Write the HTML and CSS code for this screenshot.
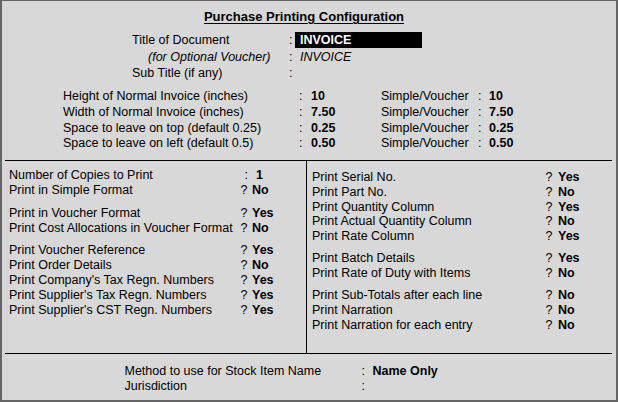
FILE: index.html
```html
<!DOCTYPE html>
<html lang="en">
<head>
<meta charset="utf-8">
<title>Purchase Printing Configuration</title>
<link rel="stylesheet" href="styles.css">
</head>
<body>
<div class="window">
  <header class="head">
    <div class="title-row"><h1 class="title">Purchase Printing Configuration</h1></div>
    <div class="doc-grid">
      <div class="lbl">Title of Document</div><div class="sep">:</div><div class="val val-selected">INVOICE</div>
      <div class="lbl lbl-opt">(for Optional Voucher)</div><div class="sep">:</div><div class="val val-opt">INVOICE</div>
      <div class="lbl">Sub Title (if any)</div><div class="sep">:</div><div class="val"></div>
    </div>
    <div class="dim-grid">
      <div>Height of Normal Invoice (inches)</div><div class="sep">:</div><div class="b">10</div><div>Simple/Voucher</div><div class="sep">:</div><div class="b">10</div>
      <div>Width of Normal Invoice (inches)</div><div class="sep">:</div><div class="b">7.50</div><div>Simple/Voucher</div><div class="sep">:</div><div class="b">7.50</div>
      <div>Space to leave on top (default 0.25)</div><div class="sep">:</div><div class="b">0.25</div><div>Simple/Voucher</div><div class="sep">:</div><div class="b">0.25</div>
      <div>Space to leave on left (default 0.5)</div><div class="sep">:</div><div class="b">0.50</div><div>Simple/Voucher</div><div class="sep">:</div><div class="b">0.50</div>
    </div>
  </header>

  <section class="options">
    <div class="col col-left">
      <div class="group">
        <div class="opt"><span>Number of Copies to Print</span><span class="osep osep-colon">:</span><span class="b oval-colon">1</span></div>
        <div class="opt"><span>Print in Simple Format</span><span class="osep">?</span><span class="b">No</span></div>
      </div>
      <div class="group">
        <div class="opt"><span>Print in Voucher Format</span><span class="osep">?</span><span class="b">Yes</span></div>
        <div class="opt"><span>Print Cost Allocations in Voucher Format</span><span class="osep">?</span><span class="b">No</span></div>
      </div>
      <div class="group">
        <div class="opt"><span>Print Voucher Reference</span><span class="osep">?</span><span class="b">Yes</span></div>
        <div class="opt"><span>Print Order Details</span><span class="osep">?</span><span class="b">No</span></div>
        <div class="opt"><span>Print Company's Tax Regn. Numbers</span><span class="osep">?</span><span class="b">Yes</span></div>
        <div class="opt"><span>Print Supplier's Tax Regn. Numbers</span><span class="osep">?</span><span class="b">Yes</span></div>
        <div class="opt"><span>Print Supplier's CST Regn. Numbers</span><span class="osep">?</span><span class="b">Yes</span></div>
      </div>
    </div>
    <div class="col col-right">
      <div class="group">
        <div class="opt"><span>Print Serial No.</span><span class="osep">?</span><span class="b">Yes</span></div>
        <div class="opt"><span>Print Part No.</span><span class="osep">?</span><span class="b">No</span></div>
        <div class="opt"><span>Print Quantity Column</span><span class="osep">?</span><span class="b">Yes</span></div>
        <div class="opt"><span>Print Actual Quantity Column</span><span class="osep">?</span><span class="b">No</span></div>
        <div class="opt"><span>Print Rate Column</span><span class="osep">?</span><span class="b">Yes</span></div>
      </div>
      <div class="group">
        <div class="opt"><span>Print Batch Details</span><span class="osep">?</span><span class="b">Yes</span></div>
        <div class="opt"><span>Print Rate of Duty with Items</span><span class="osep">?</span><span class="b">No</span></div>
      </div>
      <div class="group">
        <div class="opt"><span>Print Sub-Totals after each line</span><span class="osep">?</span><span class="b">No</span></div>
        <div class="opt"><span>Print Narration</span><span class="osep">?</span><span class="b">No</span></div>
        <div class="opt"><span>Print Narration for each entry</span><span class="osep">?</span><span class="b">No</span></div>
      </div>
    </div>
  </section>

  <footer class="foot">
    <div class="foot-grid">
      <div>Method to use for Stock Item Name</div><div class="sep">:</div><div class="b">Name Only</div>
      <div>Jurisdiction</div><div class="sep">:</div><div></div>
    </div>
  </footer>
</div>
</body>
</html>
```

FILE: styles.css
```css
* { box-sizing: border-box; }

html, body {
  margin: 0;
  padding: 0;
  background: #d8d8d8;
}

body {
  font-family: "Liberation Sans", Arial, sans-serif;
  font-size: 12.5px;
  color: #000;
}

.window {
  width: 618px;
  height: 402px;
  background: #d8d8d8;
  border-style: solid;
  border-color: #646464;
  border-width: 1px 2px 2px 2px;
  display: flex;
  flex-direction: column;
}

.b { font-weight: bold; }

/* ---------- header ---------- */
.head {
  height: 159px;
  flex: none;
  padding-top: 8px;
}

.title-row {
  display: flex;
  justify-content: center;
  padding-right: 10px;
}

.title {
  margin: 0;
  font-size: 13px;
  font-weight: bold;
  line-height: 16px;
  text-decoration: underline;
  text-decoration-thickness: 1px;
  text-underline-offset: 2px;
}

.doc-grid {
  margin-top: 7px;
  padding-left: 130px;
  display: grid;
  grid-template-columns: 157px 6px 127px;
  grid-auto-rows: 16.5px;
  line-height: 16.5px;
}

.lbl-opt {
  padding-left: 16px;
  font-style: italic;
}

.val {
  padding-left: 5px;
}

.val-selected {
  background: #000;
  color: #fff;
  font-weight: bold;
  height: 16px;
  line-height: 16px;
}

.val-opt {
  font-style: italic;
}

.dim-grid {
  margin-top: 7.7px;
  padding-left: 61px;
  display: grid;
  grid-template-columns: 236px 12px 70px 97px 11px auto;
  line-height: 15.67px;
}

/* ---------- options ---------- */
.options {
  flex: none;
  height: 194px;
  margin: 0 4px 0 3px;
  border-top: 1px solid #000;
  border-bottom: 1px solid #000;
  display: flex;
}

.col {
  display: flex;
  flex-direction: column;
  gap: 7.6px;
}

.col-left {
  width: 302px;
  border-right: 1px solid #000;
  padding: 7.3px 0 0 4px;
  line-height: 14.9px;
}

.col-right {
  flex: 1;
  padding: 9.3px 0 0 5px;
  line-height: 14.7px;
}

.opt {
  display: grid;
  white-space: nowrap;
}

.col-left .opt { grid-template-columns: 231.5px 11.5px auto; }
.col-right .opt { grid-template-columns: 233.5px 12.5px auto; }

.osep-colon { padding-left: 4px; }
.oval-colon { padding-left: 4px; }

/* ---------- footer ---------- */
.foot {
  flex: 1;
  padding: 9.5px 0 0 122.5px;
}

.foot-grid {
  display: grid;
  grid-template-columns: 237px 11px auto;
  line-height: 15px;
}
```
